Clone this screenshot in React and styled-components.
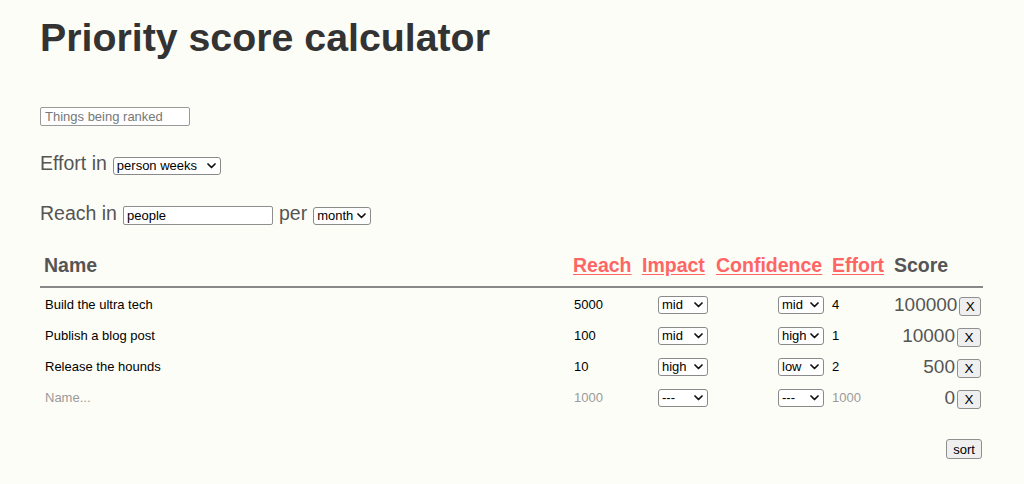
import { useState } from "react"
import styled, { createGlobalStyle } from "styled-components"

const GlobalStyle = createGlobalStyle`
  body {
    margin: 0;
    background: #fdfdf7;
    font-family: "Liberation Sans", Arial, Helvetica, sans-serif;
  }
`

const columns = "529px 69px 74px 116px 62px 93px"

const Page = styled.div`
  width: 943px;
  padding: 14px 0 0 40px;
`

const Title = styled.h1`
  margin: 0;
  font-size: 39.3px;
  line-height: 46px;
  font-weight: bold;
  color: #333;
`

const ThingsInput = styled.input`
  display: block;
  margin: 47px 0 0;
  width: 150px;
  height: 19px;
  box-sizing: border-box;
  padding: 0 4px;
  border: 1px solid #9a9a9a;
  border-radius: 2px;
  background: #fff;
  font: 13px "Liberation Sans", Arial, sans-serif;
  color: #000;

  &::placeholder {
    color: #777;
  }
`

const SettingLine = styled.div`
  display: flex;
  align-items: baseline;
  gap: 6px;
  height: 30px;
  margin-top: ${(p) => p.$top}px;
  font-size: 19.5px;
  line-height: 30px;
  color: #555;
`

const TextInput = styled.input`
  width: 150px;
  height: 19px;
  box-sizing: border-box;
  padding: 0 3px;
  border: 1px solid #8f8f8f;
  border-radius: 2px;
  background: #fff;
  font: 13px "Liberation Sans", Arial, sans-serif;
  color: #000;
`

const SelectWrap = styled.span`
  position: relative;
  display: inline-flex;
`

const Select = styled.select`
  appearance: none;
  width: ${(p) => p.$width}px;
  height: 18px;
  box-sizing: border-box;
  margin: 0;
  padding: 0 14px 0 3px;
  border: 1px solid #8a8a8a;
  border-radius: 3px;
  background: #fff;
  font: 13px "Liberation Sans", Arial, sans-serif;
  color: #000;
`

const Chevron = styled.svg`
  position: absolute;
  right: 5px;
  top: 50%;
  margin-top: -3px;
  pointer-events: none;
`

const HeaderRow = styled.div`
  display: grid;
  grid-template-columns: ${columns};
  align-items: center;
  height: 43px;
  box-sizing: border-box;
  margin-top: 17px;
  border-bottom: 2px solid #888;
`

const HeadCell = styled.div`
  padding: 0 4px;
  font-size: 19.5px;
  font-weight: bold;
  color: #555;
`

const HeadLink = styled.a`
  color: #ff6565;
  text-decoration: underline;
  text-underline-offset: 2px;
`

const Body = styled.div`
  padding-top: 1px;
`

const Row = styled.div`
  display: grid;
  grid-template-columns: ${columns};
  align-items: center;
  height: 31px;
`

const Cell = styled.div`
  display: flex;
  align-items: baseline;
  justify-content: ${(p) => p.$justify || "flex-start"};
  gap: 2px;
  padding: ${(p) => p.$pad || "0 4px"};
  min-width: 0;
`

const CellInput = styled.input`
  width: 100%;
  min-width: 0;
  padding: 0 0 0 1px;
  border: none;
  background: transparent;
  font: 13px "Liberation Sans", Arial, sans-serif;
  color: #000;

  &::placeholder {
    color: #9a9a9a;
  }
`

const ScoreValue = styled.span`
  font-size: 19px;
  color: #555;
`

const SmallButton = styled.button`
  width: ${(p) => p.$width}px;
  height: ${(p) => p.$height}px;
  padding: 0;
  border: 1px solid #8f8f8f;
  border-radius: 3px;
  background: #efefef;
  font: ${(p) => p.$size}px "Liberation Sans", Arial, sans-serif;
  color: #000;
`

const SortBar = styled.div`
  display: flex;
  justify-content: flex-end;
  margin-top: 26px;
  padding-right: 1px;
`

const impactValues = { low: 5, mid: 10, high: 20 }
const confidenceValues = { low: 5, mid: 8, high: 10 }
const levels = ["---", "low", "mid", "high"]

const initialRows = [
  { name: "Build the ultra tech", reach: "5000", impact: "mid", confidence: "mid", effort: "4" },
  { name: "Publish a blog post", reach: "100", impact: "mid", confidence: "high", effort: "1" },
  { name: "Release the hounds", reach: "10", impact: "high", confidence: "low", effort: "2" },
]

function score(row) {
  const i = impactValues[row.impact]
  const c = confidenceValues[row.confidence]
  const r = Number(row.reach)
  const e = Number(row.effort)
  if (!i || !c || !r || !e) return 0
  return Math.round((r * i * c) / e)
}

function Dropdown({ width, value, options, onChange }) {
  return (
    <SelectWrap>
      <Select $width={width} value={value} onChange={onChange}>
        {options.map((o) => (
          <option key={o} value={o}>
            {o}
          </option>
        ))}
      </Select>
      <Chevron width="9" height="6" viewBox="0 0 9 6">
        <path d="M1 1l3.5 3.5L8 1" fill="none" stroke="#111" strokeWidth="1.7" strokeLinecap="round" strokeLinejoin="round" />
      </Chevron>
    </SelectWrap>
  )
}

export default function App() {
  const [rows, setRows] = useState(initialRows)
  const [draft, setDraft] = useState({ name: "", reach: "", impact: "---", confidence: "---", effort: "" })
  const [effortUnit, setEffortUnit] = useState("person weeks")
  const [reachPeriod, setReachPeriod] = useState("month")

  const update = (index, key, value) =>
    setRows(rows.map((r, i) => (i === index ? { ...r, [key]: value } : r)))

  const remove = (index) => setRows(rows.filter((_, i) => i !== index))

  const sortRows = () => setRows([...rows].sort((a, b) => score(b) - score(a)))

  return (
    <Page>
      <GlobalStyle />
      <Title>Priority score calculator</Title>

      <ThingsInput placeholder="Things being ranked" />

      <SettingLine $top={22}>
        <span>Effort in</span>
        <Dropdown
          width={108}
          value={effortUnit}
          options={["person days", "person weeks", "person months"]}
          onChange={(e) => setEffortUnit(e.target.value)}
        />
      </SettingLine>

      <SettingLine $top={20}>
        <span>Reach in</span>
        <TextInput defaultValue="people" />
        <span>per</span>
        <Dropdown
          width={58}
          value={reachPeriod}
          options={["day", "week", "month", "year"]}
          onChange={(e) => setReachPeriod(e.target.value)}
        />
      </SettingLine>

      <HeaderRow>
        <HeadCell>Name</HeadCell>
        <HeadCell>
          <HeadLink href="#">Reach</HeadLink>
        </HeadCell>
        <HeadCell>
          <HeadLink href="#">Impact</HeadLink>
        </HeadCell>
        <HeadCell>
          <HeadLink href="#">Confidence</HeadLink>
        </HeadCell>
        <HeadCell>
          <HeadLink href="#">Effort</HeadLink>
        </HeadCell>
        <HeadCell>Score</HeadCell>
      </HeaderRow>

      <Body>
        {rows.map((row, i) => (
          <Row key={i}>
            <Cell>
              <CellInput value={row.name} onChange={(e) => update(i, "name", e.target.value)} />
            </Cell>
            <Cell>
              <CellInput value={row.reach} onChange={(e) => update(i, "reach", e.target.value)} />
            </Cell>
            <Cell $justify="flex-end">
              <Dropdown width={50} value={row.impact} options={levels} onChange={(e) => update(i, "impact", e.target.value)} />
            </Cell>
            <Cell $justify="flex-end">
              <Dropdown width={46} value={row.confidence} options={levels} onChange={(e) => update(i, "confidence", e.target.value)} />
            </Cell>
            <Cell $pad="0 4px 0 3px">
              <CellInput value={row.effort} onChange={(e) => update(i, "effort", e.target.value)} />
            </Cell>
            <Cell $justify="flex-end" $pad="0 2px 0 4px">
              <ScoreValue>{score(row)}</ScoreValue>
              <SmallButton $width={24} $height={19} $size={13.5} onClick={() => remove(i)}>
                X
              </SmallButton>
            </Cell>
          </Row>
        ))}

        <Row>
          <Cell>
            <CellInput placeholder="Name..." value={draft.name} onChange={(e) => setDraft({ ...draft, name: e.target.value })} />
          </Cell>
          <Cell>
            <CellInput placeholder="1000" value={draft.reach} onChange={(e) => setDraft({ ...draft, reach: e.target.value })} />
          </Cell>
          <Cell $justify="flex-end">
            <Dropdown width={50} value={draft.impact} options={levels} onChange={(e) => setDraft({ ...draft, impact: e.target.value })} />
          </Cell>
          <Cell $justify="flex-end">
            <Dropdown width={46} value={draft.confidence} options={levels} onChange={(e) => setDraft({ ...draft, confidence: e.target.value })} />
          </Cell>
          <Cell $pad="0 4px 0 3px">
            <CellInput placeholder="1000" value={draft.effort} onChange={(e) => setDraft({ ...draft, effort: e.target.value })} />
          </Cell>
          <Cell $justify="flex-end" $pad="0 2px 0 4px">
            <ScoreValue>{score(draft)}</ScoreValue>
            <SmallButton $width={24} $height={19} $size={13.5}>
              X
            </SmallButton>
          </Cell>
        </Row>
      </Body>

      <SortBar>
        <SmallButton $width={36} $height={20} $size={13} onClick={sortRows}>
          sort
        </SmallButton>
      </SortBar>
    </Page>
  )
}
